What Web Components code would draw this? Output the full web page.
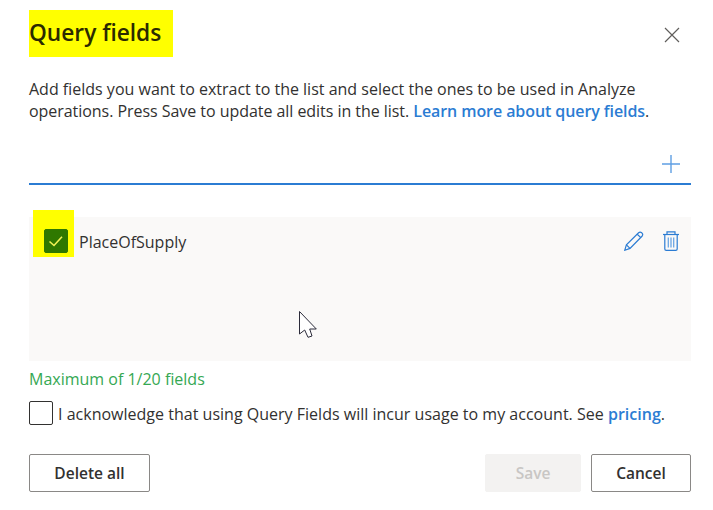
<!DOCTYPE html>
<html>
<head>
<meta charset="utf-8">
<title>Query fields</title>
<style>
    html, body { margin: 0; background: #fff; }
    body { font-family: "Open Sans", "Noto Sans", sans-serif; color: #323130; }
</style>
</head>
<body>
<query-fields-dialog></query-fields-dialog>
<script>
class QfCheckbox extends HTMLElement {
    constructor() {
        super();
        this.attachShadow({ mode: "open" });
    }
    connectedCallback() {
        const checked = this.hasAttribute("checked");
        this.shadowRoot.innerHTML = `
            <style>
                :host { display: block; width: 24px; height: 24px; }
                div {
                    box-sizing: border-box;
                    width: 24px;
                    height: 24px;
                    border-radius: 2px;
                    border: 1px solid ${checked ? "#2f7800" : "#323130"};
                    background: ${checked ? "#2f7800" : "#fff"};
                    display: flex;
                    align-items: center;
                    justify-content: center;
                }
            </style>
            <div>${checked ? `<svg width="16" height="16" viewBox="0 0 16 16"><path d="M1.5 8.5 L6 12.5 L14 3.8" fill="none" stroke="#f2f255" stroke-width="1.6"/></svg>` : ""}</div>
        `;
    }
}
customElements.define("qf-checkbox", QfCheckbox);

class QfButton extends HTMLElement {
    constructor() {
        super();
        this.attachShadow({ mode: "open" });
    }
    connectedCallback() {
        this.shadowRoot.innerHTML = `
            <style>
                :host { display: block; }
                button {
                    box-sizing: border-box;
                    height: 38px;
                    width: var(--w, 100px);
                    font: 600 15.5px "Open Sans", sans-serif;
                    color: #323130;
                    background: #fff;
                    border: 1px solid #8a8886;
                    border-radius: 2px;
                    padding: 0;
                }
                button[disabled] {
                    background: #f3f2f1;
                    border-color: #f3f2f1;
                    color: #c8c6c4;
                }
            </style>
            <button ${this.hasAttribute("disabled") ? "disabled" : ""}><slot></slot></button>
        `;
    }
}
customElements.define("qf-button", QfButton);

class QfFieldRow extends HTMLElement {
    constructor() {
        super();
        this.attachShadow({ mode: "open" });
    }
    connectedCallback() {
        this.shadowRoot.innerHTML = `
            <style>
                :host {
                    display: block;
                    position: relative;
                    height: 144px;
                    background: #faf9f8;
                    font-size: 16px;
                }
                .row {
                    display: flex;
                    align-items: center;
                    height: 48px;
                    padding: 0 12px 0 15px;
                }
                .mark {
                    position: absolute;
                    left: 4px;
                    top: -7px;
                    width: 41px;
                    height: 47px;
                    background: #ffff00;
                }
                qf-checkbox { position: relative; margin-right: 11px; }
                .name { flex: 1; margin-top: 2px; }
                svg { display: block; }
                .edit { margin-right: 19px; }
                .cursor { position: absolute; left: 270px; top: 94px; }
            </style>
            <div class="mark"></div>
            <div class="row">
                <qf-checkbox checked></qf-checkbox>
                <span class="name"><slot></slot></span>
                <svg class="edit" width="20" height="20" viewBox="0 0 20 20" fill="none" stroke="#2b7cd3" stroke-width="1.2">
                    <path d="M0.8 19.2 L2.4 13.8 L14.6 1.8 Q16 0.6 17.8 1.8 Q19.4 3.4 18.2 5 L6 17.4 Z"/>
                    <path d="M2.4 13.8 L6 17.4"/>
                    <path d="M13.2 3.2 L16.8 6.6"/>
                </svg>
                <svg width="16" height="20" viewBox="0 0 16 20" fill="none" stroke="#2b7cd3" stroke-width="1.2">
                    <path d="M0 3.5 H16"/>
                    <path d="M4 3.5 V0.8 H12 V3.5"/>
                    <path d="M1.8 3.5 V18 Q1.8 19.4 3.2 19.4 H12.8 Q14.2 19.4 14.2 18 V3.5"/>
                    <path d="M5.3 6.5 V16.5 M8 6.5 V16.5 M10.7 6.5 V16.5" stroke-width="1.3" stroke="#6ba6e4"/>
                </svg>
            </div>
            <svg class="cursor" width="20" height="28" viewBox="0 0 20 28">
                <path d="M0.5 0.5 V23 L5.7 19 L9 26.3 L13 25 L10.7 18 H17.3 Z" fill="#fff" stroke="#2b2b3a" stroke-width="1"/>
            </svg>
        `;
    }
}
customElements.define("qf-field-row", QfFieldRow);

class QueryFieldsDialog extends HTMLElement {
    constructor() {
        super();
        this.attachShadow({ mode: "open" });
    }
    connectedCallback() {
        this.shadowRoot.innerHTML = `
            <style>
                :host {
                    display: block;
                    box-sizing: border-box;
                    width: 713px;
                    height: 510px;
                    padding: 10px 22px 0 29px;
                    font-family: "Open Sans", sans-serif;
                    font-size: 16px;
                    color: #323130;
                    overflow: hidden;
                }
                header {
                    display: flex;
                    justify-content: space-between;
                    align-items: center;
                    height: 47px;
                }
                h1 {
                    margin: 0;
                    width: 144px;
                    height: 47px;
                    line-height: 46px;
                    background: #ffff00;
                    font-size: 22.7px;
                    font-weight: 600;
                    color: #2b2a00;
                    white-space: nowrap;
                }
                .close { margin-right: 11px; margin-top: 2px; display: block; }
                .intro {
                    margin: 21px 0 0;
                    line-height: 22px;
                    white-space: nowrap;
                }
                .intro div { display: flex; }
                .tight { letter-spacing: -0.045px; white-space: pre; }
                a { color: #2b7cd3; font-weight: 600; text-decoration: none; }
                .intro a { letter-spacing: -0.08px; }
                .input {
                    display: flex;
                    justify-content: flex-end;
                    align-items: center;
                    height: 26px;
                    margin-top: 29px;
                    padding: 0 10px 6px 0;
                    border-bottom: 2px solid #2b7cd3;
                }
                qf-field-row { margin-top: 32px; }
                .max {
                    color: #35a853;
                    margin-top: 6px;
                    line-height: 24px;
                }
                .ack {
                    display: flex;
                    align-items: center;
                    gap: 5px;
                    margin-top: 10px;
                    white-space: nowrap;
                }
                .ack span { margin-top: 2px; letter-spacing: 0.012px; }
                footer {
                    display: flex;
                    align-items: center;
                    margin-top: 29px;
                }
                .save { margin-left: auto; margin-right: 10px; --w: 96px; }
                .cancel { --w: 100px; }
                .delete { --w: 121px; }
            </style>
            <header>
                <h1>Query fields</h1>
                <svg class="close" width="16" height="16" viewBox="0 0 16 16" stroke="#605e5c" stroke-width="1.2"><path d="M1 1 L15 15 M15 1 L1 15"/></svg>
            </header>
            <section class="intro">
                <div>Add fields you want to extract to the list and select the ones to be used in Analyze</div>
                <div><span class="tight">operations. Press Save to update all edits in the list. </span><a>Learn more about query fields</a><span>.</span></div>
            </section>
            <div class="input">
                <svg width="20" height="20" viewBox="0 0 20 20" stroke="#5f9fe3" stroke-width="1.4"><path d="M10 1 V19 M1 10 H19"/></svg>
            </div>
            <qf-field-row>PlaceOfSupply</qf-field-row>
            <div class="max">Maximum of 1/20 fields</div>
            <div class="ack">
                <qf-checkbox></qf-checkbox>
                <span>I acknowledge that using Query Fields will incur usage to my account. See <a>pricing</a>.</span>
            </div>
            <footer>
                <qf-button class="delete">Delete all</qf-button>
                <qf-button class="save" disabled>Save</qf-button>
                <qf-button class="cancel">Cancel</qf-button>
            </footer>
        `;
    }
}
customElements.define("query-fields-dialog", QueryFieldsDialog);
</script>
</body>
</html>
